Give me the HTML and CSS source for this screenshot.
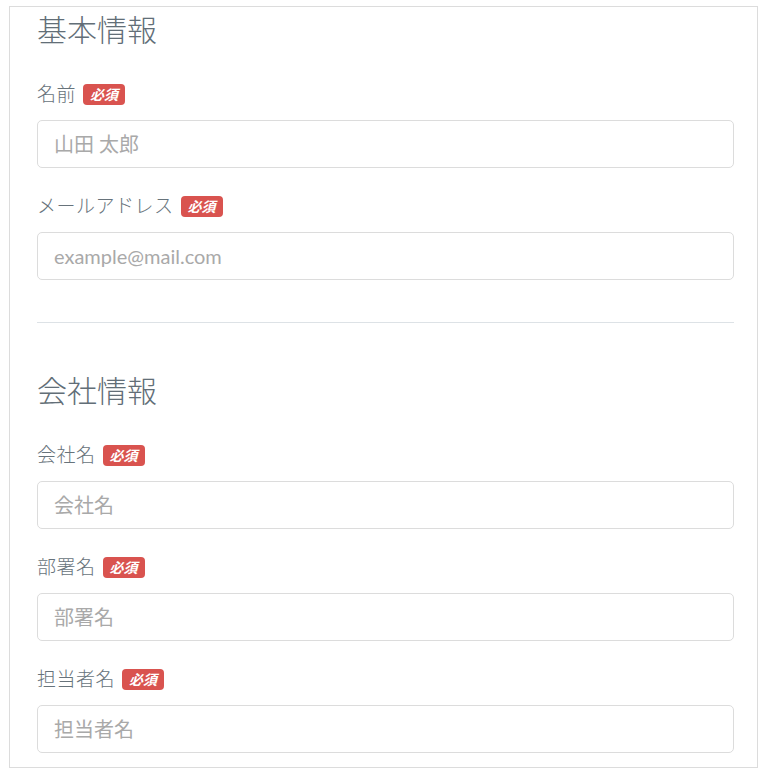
FILE: index.html
```html
<!DOCTYPE html>
<html lang="ja">
<head>
  <meta charset="UTF-8">
  <title>お問い合わせフォーム</title>
  <link rel="stylesheet" href="styles.css">
</head>
<body>
<!-- 入力フォーム本体 -->
<form class="entry-form">
  <section class="form-section">
    <h2>基本情報</h2>

    <div class="form-group">
      <label>名前<span class="badge">必須</span></label>
      <input type="text" placeholder="山田 太郎">
    </div>

    <div class="form-group">
      <label>メールアドレス<span class="badge">必須</span></label>
      <input type="email" placeholder="example@mail.com">
    </div>
  </section>

  <hr class="divider">

  <section class="form-section">
    <h2>会社情報</h2>

    <div class="form-group">
      <label>会社名<span class="badge">必須</span></label>
      <input type="text" placeholder="会社名">
    </div>

    <div class="form-group">
      <label>部署名<span class="badge">必須</span></label>
      <input type="text" placeholder="部署名">
    </div>

    <div class="form-group">
      <label>担当者名<span class="badge">必須</span></label>
      <input type="text" placeholder="担当者名">
    </div>
  </section>
</form>
</body>
</html>
```

FILE: styles.css
```css
/* ページ全体 */
body {
  margin: 0;
  padding: 6px 10px 0 9px;
  font-family: "Lato", "Noto Sans CJK JP", sans-serif;
  color: #67737b;
  background: #fff;
}

/* フォームの枠 */
.entry-form {
  border: 1px solid #dcdcdc;
  padding: 4px 23px 14px 27px;
}

/* 見出し */
h2 {
  margin: 0 0 34px 0;
  font-size: 30px;
  line-height: 36px;
  font-weight: 300;
  color: #626e77;
}

/* ラベルと入力欄 */
.form-group {
  margin-bottom: 25px;
}

.form-section .form-group:last-child {
  margin-bottom: 0;
}

label {
  display: flex;
  align-items: center;
  height: 26px;
  margin-bottom: 13px;
  font-size: 19px;
  font-weight: 300;
  line-height: 26px;
  letter-spacing: 0.5px;
}

/* 必須バッジ */
.badge {
  display: inline-block;
  margin-left: 7px;
  padding: 0 7px;
  height: 21px;
  line-height: 21px;
  font-size: 14px;
  font-weight: 700;
  font-style: italic;
  letter-spacing: 0;
  color: #fff;
  background: #d9534f;
  border-radius: 4px;
}

input {
  display: block;
  box-sizing: border-box;
  width: 100%;
  height: 48px;
  padding: 0 16px;
  font-family: inherit;
  font-size: 20px;
  color: #555;
  border: 1px solid #dcdcdc;
  border-radius: 5px;
  outline: none;
}

input::placeholder {
  color: #a9a9a9;
}

/* 区切り線 */
.divider {
  margin: 42px 0 49px 0;
  border: 0;
  border-top: 1px solid #dde2e6;
}
```
